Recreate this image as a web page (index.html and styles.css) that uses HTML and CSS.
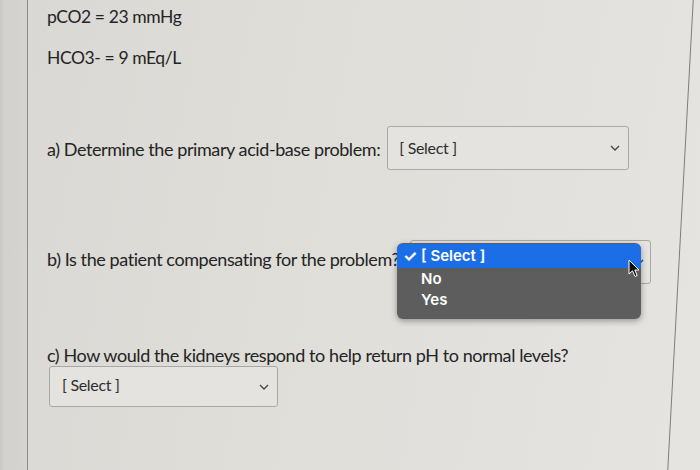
FILE: index.html
```html
<!DOCTYPE html>
<html lang="en">
<head>
<meta charset="utf-8">
<title>Acid-base quiz</title>
<link rel="stylesheet" href="styles.css">
</head>
<body>
<div class="page">
  <div class="gutter"></div>
  <div class="panel">
    <p class="given">pCO2 = 23 mmHg</p>
    <p class="given given-2">HCO3- = 9 mEq/L</p>

    <div class="row row-a">
      <span class="label">a) Determine the primary acid-base problem:</span>
      <div class="select select-a">
        <span class="select-text">[ Select ]</span>
        <svg class="chev" viewBox="0 0 10 6" width="10" height="6"><path d="M1 1 L5 5 L9 1" fill="none" stroke="#444" stroke-width="1.3"/></svg>
      </div>
    </div>

    <div class="row row-b">
      <span class="label label-b">b) Is the patient compensating for the problem?</span>
      <div class="select select-b">
        <span class="select-text select-text-hidden">[ Select ]</span>
        <svg class="chev" viewBox="0 0 10 6" width="10" height="6"><path d="M1 1 L5 5 L9 1" fill="none" stroke="#444" stroke-width="1.3"/></svg>
        <div class="menu">
          <div class="opt opt-active"><span class="check">✓</span>[ Select ]</div>
          <div class="opt">No</div>
          <div class="opt">Yes</div>
        </div>
        <svg class="cursor" viewBox="0 0 12 19" width="12" height="19"><path d="M1 1 L1 15 L4.5 11.8 L7 17.5 L9.2 16.5 L6.8 11 L11 11 Z" fill="#111" stroke="#fff" stroke-width="1" stroke-linejoin="round"/></svg>
      </div>
    </div>

    <p class="label label-c">c) How would the kidneys respond to help return pH to normal levels?</p>
    <div class="select select-c">
      <span class="select-text">[ Select ]</span>
      <svg class="chev" viewBox="0 0 10 6" width="10" height="6"><path d="M1 1 L5 5 L9 1" fill="none" stroke="#444" stroke-width="1.3"/></svg>
    </div>
  </div>
</div>
</body>
</html>
```
FILE: styles.css
```css
html, body {
  margin: 0;
  padding: 0;
}
body {
  width: 700px;
  height: 470px;
  overflow: hidden;
  background: #dcdbd7;
  font-family: Lato, "Open Sans", sans-serif;
  color: #242424;
}
.page {
  position: relative;
  display: flex;
  height: 470px;
  background: linear-gradient(100deg, #d9d8d4 0%, #dfded9 45%, #e5e4e1 100%);
}
.page::after {
  content: "";
  position: absolute;
  top: -10px;
  left: 680px;
  width: 1px;
  height: 490px;
  background: #7d7d7b;
  transform: rotate(3.1deg);
}
.gutter {
  width: 27px;
  flex: none;
  background: linear-gradient(90deg, #c9c7c3 0px, #d3d1cd 4px, #d6d4d0 100%);
  border-right: 1.5px solid #8c8b88;
}
.panel {
  flex: 1;
  padding: 5px 0 0 19px;
  display: flex;
  flex-direction: column;
  align-items: flex-start;
}
.given {
  margin: 0;
  font-size: 17.5px;
  line-height: 24px;
  letter-spacing: -0.4px;
}
.given-2 {
  margin-top: 17px;
}
.row {
  display: flex;
  align-items: center;
  font-size: 18px;
  line-height: 24px;
}
.row-a {
  margin-top: 58px;
  gap: 7px;
}
.row-b {
  margin-top: 70px;
  gap: 11px;
}
.label {
  margin: 0;
  font-size: 18px;
  line-height: 24px;
  letter-spacing: -0.42px;
  white-space: nowrap;
}
.label-b {
  margin-bottom: 6px;
}
.select {
  position: relative;
  box-sizing: border-box;
  display: flex;
  align-items: center;
  justify-content: space-between;
  border: 1px solid #a9a8a5;
  border-radius: 3px;
  background: #e4e3e0;
  font-size: 16px;
  letter-spacing: -0.3px;
  color: #2e2e2e;
}
.select-a {
  width: 242px;
  height: 44px;
  padding: 0 8px 0 11px;
  margin-top: -2px;
}
.select-b {
  width: 241px;
  height: 44px;
  padding: 0 6px 0 11px;
}
.select-text-hidden {
  visibility: hidden;
}
.select-c {
  width: 229px;
  height: 41px;
  padding: 0 8px 0 12px;
  margin-top: -1px;
  margin-left: 2px;
}
.select-c .select-text {
  margin-top: -4px;
}
.chev {
  display: block;
}
.label-c {
  margin-top: 59px;
}
.menu {
  position: absolute;
  left: -14px;
  top: 2px;
  width: 244px;
  height: 76px;
  box-sizing: border-box;
  padding-top: 2px;
  background: #5d5d5d;
  border-radius: 6px;
  box-shadow: 0 2px 6px rgba(0,0,0,0.35);
  font-family: Inter, "Liberation Sans", sans-serif;
  font-size: 15px;
  font-weight: 600;
  letter-spacing: 0;
  color: #fff;
  overflow: hidden;
}
.opt {
  height: 21px;
  line-height: 21px;
  padding-left: 24px;
  position: relative;
}
.opt-active {
  height: 24px;
  line-height: 24px;
  background: #1b6ee6;
  border-radius: 5px 5px 0 0;
  margin: -1px 0 0 0;
}
.check {
  position: absolute;
  left: 6px;
  top: 0;
  font-weight: 700;
  font-size: 16px;
}
.cursor {
  position: absolute;
  left: 217px;
  top: 18px;
}
```
